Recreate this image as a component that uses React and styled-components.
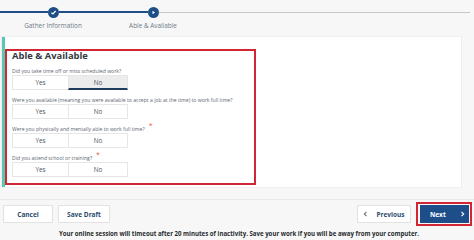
import React from "react";
import styled, { createGlobalStyle } from "styled-components";

const Global = createGlobalStyle`
  html, body { margin: 0; padding: 0; }
  body {
    background: #f7f7f7;
    font-family: "Open Sans", "Noto Sans", Arial, sans-serif;
    width: 474px;
    height: 240px;
    overflow: hidden;
  }
  * { box-sizing: border-box; }
`;

const Page = styled.div`
  width: 474px;
  height: 240px;
  display: flex;
  flex-direction: column;
`;

const Stepper = styled.div`
  display: flex;
  height: 36px;
  padding-left: 3px;
`;

const Lead = styled.div`
  width: 3px;
  margin-left: -3px;
  height: 2px;
  margin-top: 11px;
  background: #1d4f86;
`;

const Step = styled.div`
  width: 100px;
  display: flex;
  flex-direction: column;
  align-items: center;
`;

const DotRow = styled.div`
  width: 100%;
  height: 24px;
  display: flex;
  align-items: center;
`;

const Seg = styled.div`
  flex: 1;
  height: ${(p) => (p.$done ? "2px" : "1px")};
  background: ${(p) => (p.$done ? "#1d4f86" : "#c4c8cc")};
`;

const Dot = styled.div`
  width: 11px;
  height: 11px;
  border-radius: 50%;
  background: #1d4f86;
  display: flex;
  align-items: center;
  justify-content: center;
  flex: none;
`;

const StepLabel = styled.div`
  margin-top: -2px;
  font-size: 6.4px;
  line-height: 8px;
  color: #6d7b88;
  white-space: nowrap;
`;

const Rest = styled.div`
  flex: 1;
  height: 1px;
  margin-top: 12px;
  margin-right: 4px;
  background: #c4c8cc;
`;

const Card = styled.div`
  margin: 1px 13px 0 2px;
  height: 150px;
  background: #ffffff;
  border-left: 3px solid #5cc6b4;
  box-shadow: 0 0 0 1px #efefef;
  padding: 12px 0 2px 0;
`;

const Section = styled.div`
  width: 251px;
  height: 136px;
  border: 2px solid #d32634;
  padding: 0 5px;
`;

const Title = styled.div`
  font-size: 9.4px;
  line-height: 10px;
  font-weight: 700;
  color: #33393f;
  margin-bottom: 6px;
`;

const Question = styled.div`
  margin-bottom: 6px;
`;

const QLabel = styled.div`
  font-size: 5.1px;
  line-height: 8px;
  color: #5d6670;
  white-space: nowrap;
  display: flex;
  align-items: flex-start;
`;

const Req = styled.span`
  color: #e8663a;
  font-size: 7px;
  line-height: 6px;
  margin-left: 4px;
  margin-top: -2px;
`;

const Toggle = styled.div`
  display: flex;
`;

const Choice = styled.div`
  width: ${(p) => p.$w}px;
  height: 15px;
  display: flex;
  align-items: center;
  justify-content: center;
  font-size: 6.3px;
  color: #4a535c;
  background: ${(p) => (p.$selected ? "#ececec" : "#ffffff")};
  border: 1px solid #e6e6e6;
  border-bottom: ${(p) => (p.$selected ? "2px solid #1f3d5a" : "1px solid #e6e6e6")};
  margin-left: -1px;
  &:first-child { margin-left: 0; }
`;

const Footer = styled.div`
  margin-top: 12px;
  border-top: 1px solid #e9e9e9;
  padding: 2px 3px 0 3px;
  display: flex;
  align-items: center;
  height: 27px;
`;

const Btn = styled.div`
  height: 18px;
  width: ${(p) => p.$w}px;
  display: flex;
  align-items: center;
  justify-content: center;
  gap: 8px;
  border: 1px solid #e2e2e2;
  background: #ffffff;
  color: #2b4b6e;
  font-size: 6.5px;
  font-weight: 700;
  margin-right: 5px;
`;

const Spacer = styled.div`
  flex: 1;
`;

const Highlight = styled.div`
  border: 2px solid #d32634;
  padding: 1px 1px 1px 2px;
  margin-right: -1px;
`;

const NextBtn = styled.div`
  width: 49px;
  height: 18px;
  background: #1d4e8a;
  color: #ffffff;
  font-size: 6.5px;
  font-weight: 700;
  display: flex;
  align-items: center;
  justify-content: space-between;
  padding: 0 4px 0 10px;
`;

const Notice = styled.div`
  margin-top: 3px;
  padding-left: 4px;
  text-align: center;
  font-size: 6.1px;
  line-height: 9px;
  font-weight: 700;
  color: #262a2e;
`;

const Chev = ({ dir, color }) => (
  <svg width="5" height="6" viewBox="0 0 5 6">
    <path
      d={dir === "left" ? "M3.5 0.8 L1.3 3 L3.5 5.2" : "M1.5 0.8 L3.7 3 L1.5 5.2"}
      fill="none"
      stroke={color}
      strokeWidth="1.1"
    />
  </svg>
);

const questions = [
  { text: "Did you take time off or miss scheduled work?", sel: "No" },
  { text: "Were you available (meaning you were available to accept a job at the time) to work full time?" },
  { text: "Were you physically and mentally able to work full time?", req: true },
  { text: "Did you attend school or training?", req: true },
];

export default function App() {
  return (
    <Page>
      <Global />
      <Stepper>
        <Lead />
        <Step>
          <DotRow>
            <Seg $done />
            <Dot>
              <svg width="7" height="7" viewBox="0 0 7 7">
                <path d="M1.4 3.7 L2.9 5 L5.6 2" fill="none" stroke="#fff" strokeWidth="1.2" />
              </svg>
            </Dot>
            <Seg $done />
          </DotRow>
          <StepLabel>Gather Information</StepLabel>
        </Step>
        <Step>
          <DotRow>
            <Seg $done />
            <Dot>
              <svg width="7" height="7" viewBox="0 0 7 7">
                <path d="M2.5 1.8 L5 3.5 L2.5 5.2 Z" fill="#fff" />
              </svg>
            </Dot>
            <Seg />
          </DotRow>
          <StepLabel>Able &amp; Available</StepLabel>
        </Step>
        <Rest />
      </Stepper>

      <Card>
        <Section>
          <Title>Able &amp; Available</Title>
          {questions.map((q, i) => (
            <Question key={i}>
              <QLabel>
                {q.text}
                {q.req && <Req>*</Req>}
              </QLabel>
              <Toggle>
                <Choice $w={57} $selected={q.sel === "Yes"}>Yes</Choice>
                <Choice $w={60} $selected={q.sel === "No"}>No</Choice>
              </Toggle>
            </Question>
          ))}
        </Section>
      </Card>

      <Footer>
        <Btn $w={50}>Cancel</Btn>
        <Btn $w={52}>Save Draft</Btn>
        <Spacer />
        <Btn $w={54}>
          <Chev dir="left" color="#6b7480" />
          Previous
        </Btn>
        <Highlight>
          <NextBtn>
            Next
            <Chev dir="right" color="#ffffff" />
          </NextBtn>
        </Highlight>
      </Footer>
      <Notice>
        Your online session will timeout after 20 minutes of inactivity. Save your work if you will be away from your computer.
      </Notice>
    </Page>
  );
}
